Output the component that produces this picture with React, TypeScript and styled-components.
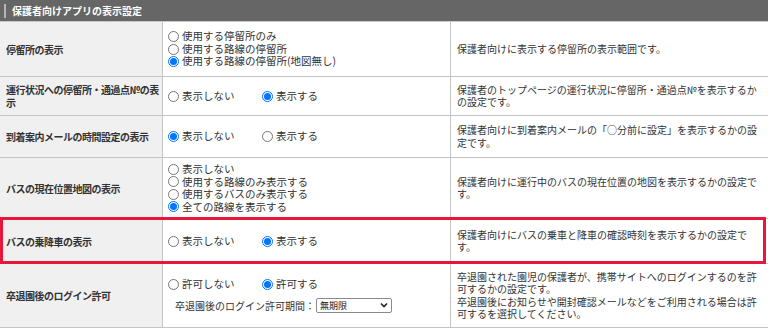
import React from 'react';
import styled, { createGlobalStyle } from 'styled-components';

const GlobalStyle = createGlobalStyle`
  html, body {
    margin: 0;
    padding: 0;
    background: #ffffff;
  }
  body {
    font-family: "Noto Sans CJK JP", "Noto Sans", sans-serif;
    font-size: 10px;
    color: #333;
  }
`;

// Styled Components:

const Panel = styled.section`
  width: 768px;
  overflow: hidden;
`;

const Heading = styled.h2`
  margin: 0;
  height: 22px;
  display: flex;
  align-items: center;
  gap: 6px;
  padding-left: 4px;
  background: #666666;
  color: #ffffff;
  font-size: 10px;
  font-weight: bold;
  border-bottom: 1px solid #c8c8c8;
  box-sizing: border-box;
`;

const HeadingMark = styled.span`
  width: 2px;
  height: 14px;
  background: #b5b5b5;
`;

const Row = styled.div<{ $h: number; $mark?: boolean }>`
  display: grid;
  grid-template-columns: 163px 288px 1fr;
  min-height: ${p => p.$h}px;
  border-bottom: 1px solid #c4c4c4;
  box-sizing: border-box;
  position: relative;
  ${p => p.$mark && `
    &::after {
      content: '';
      position: absolute;
      left: 0;
      right: 2px;
      top: -2px;
      bottom: -1px;
      border: 3px solid #e8173a;
      pointer-events: none;
    }
  `}
`;

const Label = styled.div`
  background: #f0f0f0;
  border-right: 1px solid #c4c4c4;
  display: flex;
  align-items: center;
  padding: 0 2px 0 6px;
  font-weight: bold;
  line-height: 13px;
  letter-spacing: -0.5px;
  color: #333;
`;

const Field = styled.div`
  border-right: 1px solid #c4c4c4;
  display: flex;
  flex-direction: column;
  justify-content: center;
  padding: 2px 5px;
  gap: 7px;
`;

const Note = styled.div`
  display: flex;
  align-items: center;
  padding: 2px 6px;
  line-height: 12.5px;
  color: #333;
`;

const Choices = styled.div<{ $inline?: boolean }>`
  display: flex;
  flex-direction: ${p => (p.$inline ? 'row' : 'column')};
`;

const Choice = styled.label<{ $inline?: boolean }>`
  display: flex;
  align-items: center;
  gap: 3px;
  height: 12.5px;
  line-height: 12.5px;
  width: ${p => (p.$inline ? '94px' : 'auto')};
  color: #333;
  font-size: 10.5px;
`;

const Dot = styled.span<{ $on?: boolean }>`
  width: 11px;
  height: 11px;
  border-radius: 50%;
  box-sizing: border-box;
  border: 1px solid ${p => (p.$on ? '#0075ff' : '#767676')};
  background: #fff;
  display: flex;
  align-items: center;
  justify-content: center;
  flex-shrink: 0;
  &::after {
    content: '';
    width: 7px;
    height: 7px;
    border-radius: 50%;
    background: ${p => (p.$on ? '#0075ff' : 'transparent')};
  }
`;

const PeriodLine = styled.div`
  display: flex;
  align-items: center;
  padding-left: 7px;
  gap: 1px;
  line-height: 15px;
`;

const Select = styled.div`
  width: 76px;
  height: 15px;
  border: 1px solid #8a8a8a;
  border-radius: 2px;
  box-sizing: border-box;
  display: flex;
  align-items: center;
  justify-content: space-between;
  padding: 0 3px;
  font-size: 9px;
  color: #222;
`;

type Opt = { text: string; on?: boolean };

function Radios({ opts, inline }: { opts: Opt[]; inline?: boolean }) {
  return (
    <Choices $inline={inline}>
      {opts.map(o => (
        <Choice key={o.text} $inline={inline}>
          <Dot $on={o.on} />
          {o.text}
        </Choice>
      ))}
    </Choices>
  );
}

function App() {
  return (
    <>
      <GlobalStyle />
      <Panel>
        <Heading>
          <HeadingMark />
          保護者向けアプリの表示設定
        </Heading>

        <Row $h={55}>
          <Label>停留所の表示</Label>
          <Field>
            <Radios
              opts={[
                { text: '使用する停留所のみ' },
                { text: '使用する路線の停留所' },
                { text: '使用する路線の停留所(地図無し)', on: true },
              ]}
            />
          </Field>
          <Note>保護者向けに表示する停留所の表示範囲です。</Note>
        </Row>

        <Row $h={39}>
          <Label>運行状況への停留所・通過点№の表示</Label>
          <Field>
            <Radios inline opts={[{ text: '表示しない' }, { text: '表示する', on: true }]} />
          </Field>
          <Note>保護者のトップページの運行状況に停留所・通過点№を表示するかの設定です。</Note>
        </Row>

        <Row $h={42}>
          <Label>到着案内メールの時間設定の表示</Label>
          <Field>
            <Radios inline opts={[{ text: '表示しない', on: true }, { text: '表示する' }]} />
          </Field>
          <Note>保護者向けに到着案内メールの「○分前に設定」を表示するかの設定です。</Note>
        </Row>

        <Row $h={61}>
          <Label>バスの現在位置地図の表示</Label>
          <Field>
            <Radios
              opts={[
                { text: '表示しない' },
                { text: '使用する路線のみ表示する' },
                { text: '使用するバスのみ表示する' },
                { text: '全ての路線を表示する', on: true },
              ]}
            />
          </Field>
          <Note>保護者向けに運行中のバスの現在位置の地図を表示するかの設定です。</Note>
        </Row>

        <Row $h={45} $mark>
          <Label>バスの乗降車の表示</Label>
          <Field>
            <Radios inline opts={[{ text: '表示しない' }, { text: '表示する', on: true }]} />
          </Field>
          <Note>保護者向けにバスの乗車と降車の確認時刻を表示するかの設定です。</Note>
        </Row>

        <Row $h={64}>
          <Label>卒退園後のログイン許可</Label>
          <Field>
            <Radios inline opts={[{ text: '許可しない' }, { text: '許可する', on: true }]} />
            <PeriodLine>
              卒退園後のログイン許可期間：
              <Select>
                無期限
                <svg width="8" height="6" viewBox="0 0 8 6">
                  <path d="M1 1.5 L4 4.5 L7 1.5" fill="none" stroke="#222" strokeWidth="1.6" />
                </svg>
              </Select>
            </PeriodLine>
          </Field>
          <Note>
            卒退園された園児の保護者が、携帯サイトへのログインするのを許可するかの設定です。
            <br />
            卒退園後にお知らせや開封確認メールなどをご利用される場合は許可するを選択してください。
          </Note>
        </Row>
      </Panel>
    </>
  );
}

export default App;
